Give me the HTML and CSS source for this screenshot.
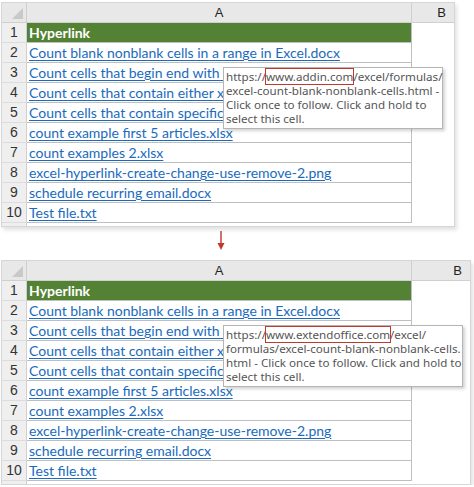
FILE: index.html
```html
<!DOCTYPE html>
<html lang="en">
<head>
    <meta charset="UTF-8">
    <title>Hyperlink tooltip</title>
    <link rel="stylesheet" href="styles.css">
</head>
<body>
    <div class="sheet sheet-top">
        <table class="grid">
            <tr class="colhead">
                <td class="corner"><span class="tri"></span></td>
                <td class="col-a">A</td>
                <td class="col-b">B</td>
            </tr>
            <tr><td class="rn">1</td><td class="hdr">Hyperlink</td><td class="blank"></td></tr>
            <tr><td class="rn">2</td><td class="cell"><a>Count blank nonblank cells in a range in Excel.docx</a></td><td class="blank"></td></tr>
            <tr><td class="rn">3</td><td class="cell"><a>Count cells that begin end with specific text.docx</a></td><td class="blank"></td></tr>
            <tr><td class="rn">4</td><td class="cell"><a>Count cells that contain either x or y.docx</a></td><td class="blank"></td></tr>
            <tr><td class="rn">5</td><td class="cell"><a>Count cells that contain specific text.docx</a></td><td class="blank"></td></tr>
            <tr><td class="rn">6</td><td class="cell"><a>count example first 5 articles.xlsx</a></td><td class="blank"></td></tr>
            <tr><td class="rn">7</td><td class="cell"><a>count examples 2.xlsx</a></td><td class="blank"></td></tr>
            <tr><td class="rn">8</td><td class="cell"><a>excel-hyperlink-create-change-use-remove-2.png</a></td><td class="blank"></td></tr>
            <tr><td class="rn">9</td><td class="cell"><a>schedule recurring email.docx</a></td><td class="blank"></td></tr>
            <tr><td class="rn">10</td><td class="cell"><a>Test file.txt</a></td><td class="blank"></td></tr>
            <tr class="tail"><td class="rn"></td><td></td><td></td></tr>
        </table>
        <div class="tip tip-top">
            https://<span class="mark">www.addin.com</span>/excel/formulas/<br>
            excel-count-blank-nonblank-cells.html -<br>
            Click once to follow. Click and hold to<br>
            select this cell.
        </div>
    </div>

    <div class="arrow">
        <svg width="10" height="20" viewBox="0 0 10 20">
            <line x1="5" y1="0" x2="5" y2="14" stroke="#c0392b" stroke-width="1.4"/>
            <path d="M1.5 12 L5 19 L8.5 12 Z" fill="#c0392b"/>
        </svg>
    </div>

    <div class="sheet sheet-bottom">
        <table class="grid">
            <tr class="colhead">
                <td class="corner"><span class="tri"></span></td>
                <td class="col-a">A</td>
                <td class="col-b">B</td>
            </tr>
            <tr><td class="rn">1</td><td class="hdr">Hyperlink</td><td class="blank"></td></tr>
            <tr><td class="rn">2</td><td class="cell"><a>Count blank nonblank cells in a range in Excel.docx</a></td><td class="blank"></td></tr>
            <tr><td class="rn">3</td><td class="cell"><a>Count cells that begin end with specific text.docx</a></td><td class="blank"></td></tr>
            <tr><td class="rn">4</td><td class="cell"><a>Count cells that contain either x or y.docx</a></td><td class="blank"></td></tr>
            <tr><td class="rn">5</td><td class="cell"><a>Count cells that contain specific text.docx</a></td><td class="blank"></td></tr>
            <tr><td class="rn">6</td><td class="cell"><a>count example first 5 articles.xlsx</a></td><td class="blank"></td></tr>
            <tr><td class="rn">7</td><td class="cell"><a>count examples 2.xlsx</a></td><td class="blank"></td></tr>
            <tr><td class="rn">8</td><td class="cell"><a>excel-hyperlink-create-change-use-remove-2.png</a></td><td class="blank"></td></tr>
            <tr><td class="rn">9</td><td class="cell"><a>schedule recurring email.docx</a></td><td class="blank"></td></tr>
            <tr><td class="rn">10</td><td class="cell"><a>Test file.txt</a></td><td class="blank"></td></tr>
            <tr class="tail"><td class="rn"></td><td></td><td></td></tr>
        </table>
        <div class="tip tip-bottom">
            https://<span class="mark">www.extendoffice.com</span>/excel/<br>
            formulas/excel-count-blank-nonblank-cells.<br>
            html - Click once to follow. Click and hold to<br>
            select this cell.
        </div>
    </div>
</body>
</html>
```

FILE: styles.css
```css
body {
    margin: 0;
    background: #fff;
    font-family: "Lato", "Liberation Sans", sans-serif;
}

.sheet {
    position: relative;
    display: inline-block;
    vertical-align: top;
    margin-left: 1px;
    border: 1px solid #d6d6d6;
    box-shadow: 2px 3px 4px rgba(0, 0, 0, 0.12);
}
.sheet-top {
    margin-top: 2px;
}
.sheet-bottom {
    margin-top: 7px;
}

.grid {
    border-collapse: collapse;
    table-layout: fixed;
    font-size: 14px;
}
.grid td {
    padding: 0 2px;
    height: 19px;
    white-space: nowrap;
    overflow: hidden;
    line-height: 19px;
}
.sheet-top .grid { width: 452px; }
.sheet-bottom .grid { width: 468px; }

.colhead td {
    background: #e8e8e8;
    border-bottom: 1px solid #cfcfcf;
    height: 19px;
    color: #222;
    text-align: center;
    font-family: "Liberation Sans", sans-serif;
    font-size: 13px;
}
.corner {
    width: 20px;
    position: relative;
    border-right: 1px solid #cfcfcf;
}
.tri {
    position: absolute;
    right: 3px;
    bottom: 3px;
    width: 0;
    height: 0;
    border-left: 11px solid transparent;
    border-bottom: 11px solid #c9c9c9;
}
.colhead .col-a {
    border-right: 1px solid #cfcfcf;
}
.sheet-top .col-b { width: 32px; }
.sheet-bottom .col-b { width: 48px; }
.colhead .col-b {
    text-align: right;
    padding-right: 8px;
}

.rn {
    background: #efefef;
    color: #333;
    text-align: center;
    border-right: 1px solid #cfcfcf;
    border-bottom: 1px solid #dcdcdc;
    font-family: "Liberation Sans", sans-serif;
    font-size: 14px;
}

.hdr {
    background: #548235;
    color: #fff;
    font-weight: bold;
    border-bottom: 1px solid #bfbfbf;
    border-right: 1px solid #bfbfbf;
}
.cell {
    border-bottom: 1px solid #bfbfbf;
    border-right: 1px solid #bfbfbf;
}
.cell a {
    color: #1a6bbd;
    text-decoration: underline;
    text-underline-offset: 2px;
}
.blank {
    background: #fff;
}

.tail td {
    height: 3px;
    line-height: 3px;
    border-bottom: none;
}
.tail .rn {
    border-bottom: none;
}

.tip {
    position: absolute;
    left: 221px;
    background: #fff;
    border: 1px solid #b5b5b5;
    box-shadow: 2px 2px 3px rgba(0, 0, 0, 0.18);
    color: #555;
    font-family: "Noto Sans", sans-serif;
    font-size: 11.6px;
    line-height: 14px;
    padding: 2px 2px 2px 2px;
    white-space: nowrap;
}
.tip-top {
    top: 64px;
    width: 214px;
}
.tip-bottom {
    top: 64px;
    width: 234px;
}
.mark {
    outline: 1.5px solid #c0392b;
    outline-offset: 0px;
}

.arrow {
    display: flex;
    justify-content: center;
    width: 442px;
    padding-top: 4px;
    height: 22px;
}
```
